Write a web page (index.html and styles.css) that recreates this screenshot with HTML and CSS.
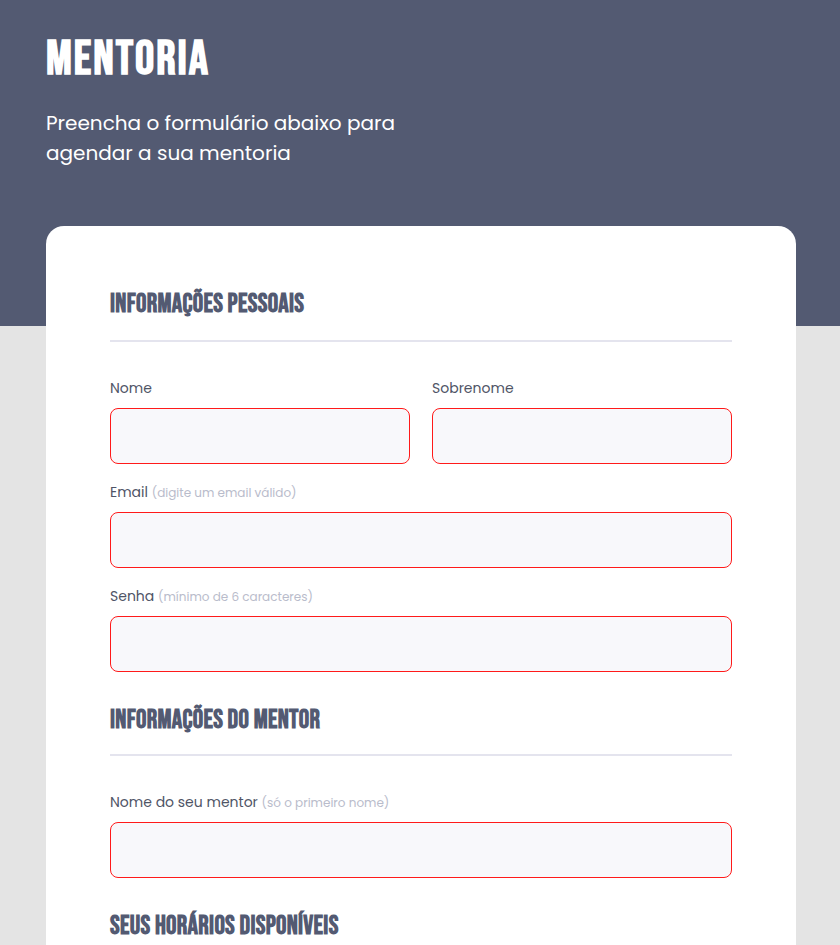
FILE: index.html
```html
<!DOCTYPE html>
<html lang="pt-BR">
<head>
<meta charset="utf-8">
<title>Mentoria</title>
<link rel="stylesheet" href="styles.css">
</head>
<body>
  <div class="page">
    <header class="hero">
      <h1 class="hero-title">MENTORIA</h1>
      <p class="hero-text">Preencha o formulário abaixo para agendar a sua mentoria</p>
    </header>
    <main class="card">
      <form class="form">
        <section class="section">
          <h2 class="section-title">INFORMAÇÕES PESSOAIS</h2>
          <div class="section-body">
            <div class="row">
              <div class="field">
                <label class="label">Nome</label>
                <input class="input" type="text">
              </div>
              <div class="field">
                <label class="label">Sobrenome</label>
                <input class="input" type="text">
              </div>
            </div>
            <div class="field">
              <label class="label">Email <span class="hint">(digite um email válido)</span></label>
              <input class="input" type="email">
            </div>
            <div class="field">
              <label class="label">Senha <span class="hint">(mínimo de 6 caracteres)</span></label>
              <input class="input" type="password">
            </div>
          </div>
        </section>
        <section class="section">
          <h2 class="section-title">INFORMAÇÕES DO MENTOR</h2>
          <div class="section-body">
            <div class="field">
              <label class="label">Nome do seu mentor <span class="hint">(só o primeiro nome)</span></label>
              <input class="input" type="text">
            </div>
          </div>
        </section>
        <section class="section">
          <h2 class="section-title">SEUS HORÁRIOS DISPONÍVEIS</h2>
        </section>
      </form>
    </main>
  </div>
</body>
</html>
```

FILE: styles.css
```css
* { box-sizing: border-box; }

html, body {
  margin: 0;
  padding: 0;
}

body {
  background: linear-gradient(#535a72 0, #535a72 326px, #e4e4e4 326px);
  min-height: 100vh;
  font-family: "Poppins", "Open Sans", "Liberation Sans", sans-serif;
  color: #535a72;
}

.page {
  width: 750px;
  margin-left: 46px;
}

.hero {
  padding-top: 36px;
  padding-bottom: 58px;
}

.hero-title {
  margin: 0;
  font-family: "Bebas Neue", "Liberation Sans Narrow", "DejaVu Sans Condensed", sans-serif;
  font-weight: 700;
  font-size: 48px;
  letter-spacing: 2px;
  line-height: 48px;
  color: #ffffff;
}

.hero-text {
  margin: 24px 0 0;
  max-width: 400px;
  font-size: 20px;
  line-height: 30px;
  color: #ffffff;
}

.card {
  background: #ffffff;
  border-radius: 18px 18px 0 0;
  padding: 64px 64px 40px;
}

.section + .section {
  padding-top: 16px;
}

.section-title {
  margin: 0 0 18px;
  font-family: "Bebas Neue", "Liberation Sans Narrow", "DejaVu Sans Condensed", sans-serif;
  font-weight: 700;
  font-size: 26px;
  letter-spacing: 0.3px;
  line-height: 30px;
  height: 30px;
  color: #535a72;
}

.section:first-child .section-title {
  margin-bottom: 20px;
}

.section-body {
  border-top: 2px solid #e4e4ee;
  padding-top: 36px;
}

.row {
  display: grid;
  grid-template-columns: 1fr 1fr;
  column-gap: 22px;
  margin-bottom: 18px;
}

.field {
  display: flex;
  flex-direction: column;
  gap: 10px;
  margin-bottom: 18px;
}

.row > .field {
  margin-bottom: 0;
}

.label {
  display: block;
  height: 20px;
  font-size: 14px;
  line-height: 20px;
  color: #4f5466;
}

.hint {
  font-size: 12px;
  line-height: 14px;
  color: #b9bccb;
}

.input {
  display: block;
  width: 100%;
  height: 56px;
  margin: 0;
  padding: 0 16px;
  border: 1px solid #ff1a1a;
  border-radius: 8px;
  background: #f8f8fb;
  font: inherit;
  outline: none;
}
```
